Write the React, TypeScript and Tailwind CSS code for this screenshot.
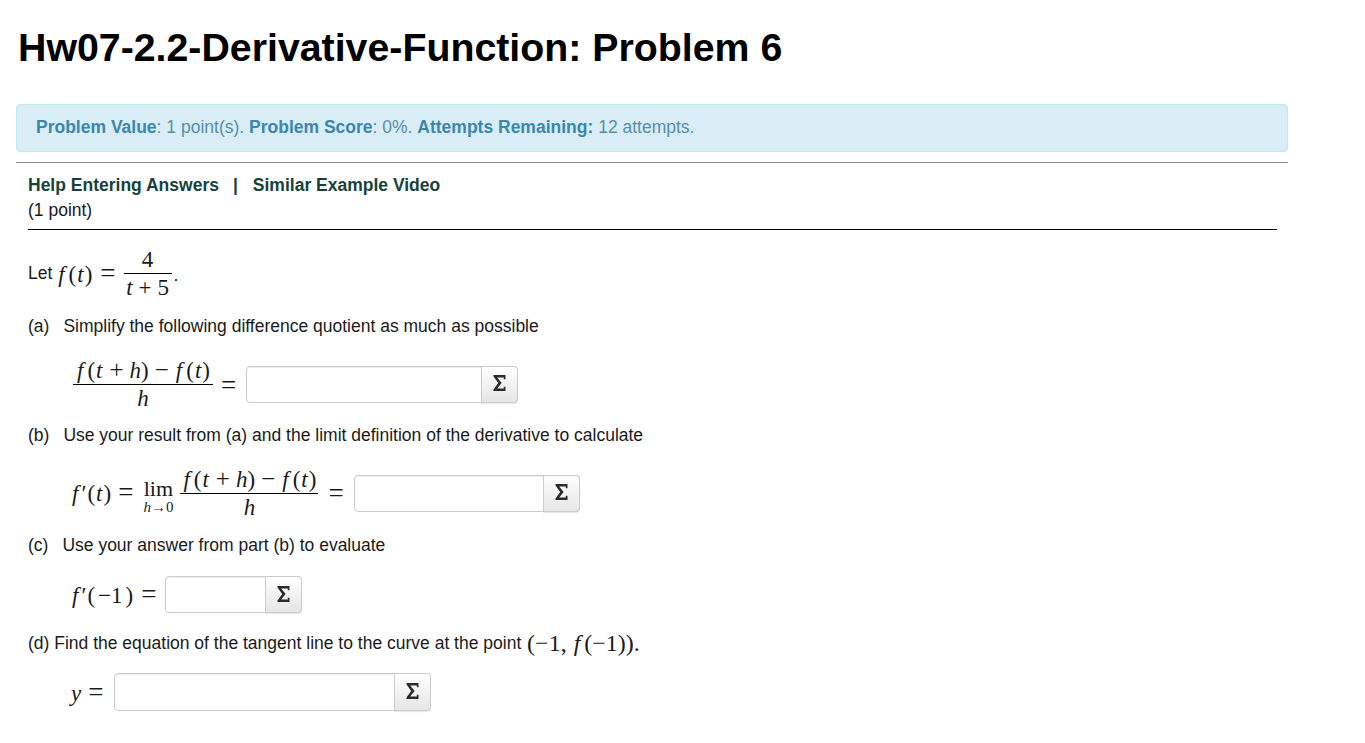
const M = ({ children, className = '' }: { children: React.ReactNode; className?: string }) => (
  <span className={`inline-flex items-baseline whitespace-nowrap font-['Liberation_Serif',serif] text-[23px] leading-none ${className}`}>{children}</span>
);

const V = ({ children }: { children: React.ReactNode }) => <i className="font-['Liberation_Serif',serif]">{children}</i>;

// f and t sit tight against their brackets in this font, so they get a bit of room
const F = () => <i className="mr-[4px] ml-[1px]">f</i>;
const T = () => <i className="mx-[1px]">t</i>;

const FPrime = () => (
  <>
    <i className="ml-[1px]">f</i>
    <span className="mr-[1px] ml-[3px]">′</span>
  </>
);

const Op = ({ children, className = 'mx-[6px] text-[25px]' }: { children: React.ReactNode; className?: string }) => <span className={className}>{children}</span>;

const Eq = ({ className = 'mx-[7px]' }: { className?: string }) => <span className={`text-[27px] ${className}`}>=</span>;

const Frac = ({ top, bottom, className = '' }: { top: React.ReactNode; bottom: React.ReactNode; className?: string }) => (
  <span className={`inline-flex flex-col items-center text-[23px] leading-none ${className}`}>
    <span className="w-full border-b border-black pb-[2px] text-center whitespace-nowrap">{top}</span>
    <span className="pt-[2px] pb-[2px] text-center whitespace-nowrap">{bottom}</span>
  </span>
);

const Quotient = ({ width }: { width: string }) => (
  <Frac
    className={`${width} font-['Liberation_Serif',serif]`}
    top={<M><F />(<T /><Op>+</Op><V>h</V>)<Op>−</Op><F />(<T />)</M>}
    bottom={<V>h</V>}
  />
);

const AnswerBox = ({ width, height = 'h-[37px]' }: { width: string; height?: string }) => (
  <span className={`flex ${height} ${width} rounded-[4px] border border-[#ccc] bg-white shadow-[inset_0_1px_1px_rgba(0,0,0,0.075)]`}>
    <span className="flex-1" />
    <span className="-my-px -mr-px flex w-[37px] items-center justify-center rounded-r-[4px] border border-[#ccc] bg-gradient-to-b from-white to-[#e6e6e6] shadow-[0_1px_1px_rgba(0,0,0,0.1)]">
      <svg className="mb-[2px]" width="13" height="16" viewBox="0 0 13 16">
        <path d="M0.5 0H12.5V4.2H10.8V2.6H4.2L8.6 8 4.2 13.4H10.8V11.8H12.5V16H0.5V14.4L5.2 8 0.5 1.6Z" fill="#2b2b2b" />
      </svg>
    </span>
  </span>
);

export default function App() {
  return (
    <div className="min-h-[743px] w-[1365px] overflow-hidden bg-white pl-4 font-['Liberation_Sans',Arial,sans-serif] text-[17.5px] text-[#1a1a1a]">
      <h1 className="pt-[25px] pl-[2px] text-[39.3px] leading-[44px] font-bold text-black">Hw07-2.2-Derivative-Function: Problem 6</h1>

      <div className="mt-[35px] flex h-[48px] w-[1272px] items-center rounded-[4px] border border-[#bce8f1] bg-[#d9edf7] pb-[2px] pl-[19px] text-[#3a87ad]">
        <span><b>Problem Value</b><span className="text-[#5a8da8]">: 1 point(s). </span><b>Problem Score</b><span className="text-[#5a8da8]">: 0%. </span><b>Attempts Remaining:</b><span className="text-[#5a8da8]"> 12 attempts.</span></span>
      </div>

      <div className="mt-[10px] w-[1272px] border-t border-[#8c8c8c]" />

      <div className="w-[1261px] pl-3">
        <div className="mt-[12px] leading-[20px] font-bold text-[#17423a]">
          Help Entering Answers<span className="pr-[15px] pl-[14px]">|</span>Similar Example Video
        </div>
        <div className="mt-[5px] leading-[20px]">(1 point)</div>
        <div className="mt-[9px] border-t border-black" />

        <div className="mt-[17px] flex h-[54px] items-center">
          <span className="mb-[2px]">Let&nbsp;</span>
          <M className="mb-[2px]"><F />(<T />)<Eq className="mr-[8px] ml-[8px]" /></M>
          <Frac className="w-[48px] font-['Liberation_Serif',serif] text-[21px]" top="4" bottom={<M className="text-[21px]"><V>t</V><Op className="mx-[6px] text-[23px]">+</Op>5</M>} />
          <span className="mt-[2px] ml-[2px]">.</span>
        </div>

        <p className="mt-[15px] leading-[20px]">(a)<span className="ml-[14px]">Simplify the following difference quotient as much as possible</span></p>

        <div className="mt-[20px] ml-[45px] flex h-[56px] items-center">
          <Quotient width="w-[140px]" />
          <M className="mt-[3px]"><Eq className="mr-[10px] ml-[8px]" /></M>
          <AnswerBox width="w-[272px]" />
        </div>

        <p className="mt-[13px] leading-[20px]">(b)<span className="ml-[14px]">Use your result from (a) and the limit definition of the derivative to calculate</span></p>

        <div className="mt-[20px] ml-[43px] flex h-[56px] items-center">
          <M className="mb-[2px]"><FPrime />(<T />)<Eq /></M>
          <span className="mt-[6px] mr-[7px] ml-[3px] flex flex-col items-center font-['Liberation_Serif',serif] leading-none">
            <span className="text-[22px]">lim</span>
            <span className="text-[15px]"><V>h</V>→0</span>
          </span>
          <Quotient width="w-[138px]" />
          <M className="mt-[1px]"><Eq className="mx-[10px]" /></M>
          <AnswerBox width="w-[226px]" />
        </div>

        <p className="mt-[14px] leading-[20px]">(c)<span className="ml-[14px]">Use your answer from part (b) to evaluate</span></p>

        <div className="mt-[21px] ml-[43px] flex h-[37px] items-center">
          <M className="mb-[1px]"><FPrime />(<span className="mx-[3px]">−1</span>)<Eq className="mr-[7px] ml-[8px]" /></M>
          <span className="ml-[2px]"><AnswerBox width="w-[137px]" /></span>
        </div>

        <p className="mt-[20px] flex h-[20px] items-center whitespace-pre">(d) Find the equation of the tangent line to the curve at the point <M className="ml-[1px] text-[24px]">(−1,<span className="ml-[6px]" /><F />(−1)).</M></p>

        <div className="mt-[20px] ml-[43px] flex h-[38px] items-center">
          <M><V>y</V><Eq /></M>
          <span className="ml-[4px]"><AnswerBox width="w-[317px]" height="h-[38px]" /></span>
        </div>
      </div>
    </div>
  );
}
